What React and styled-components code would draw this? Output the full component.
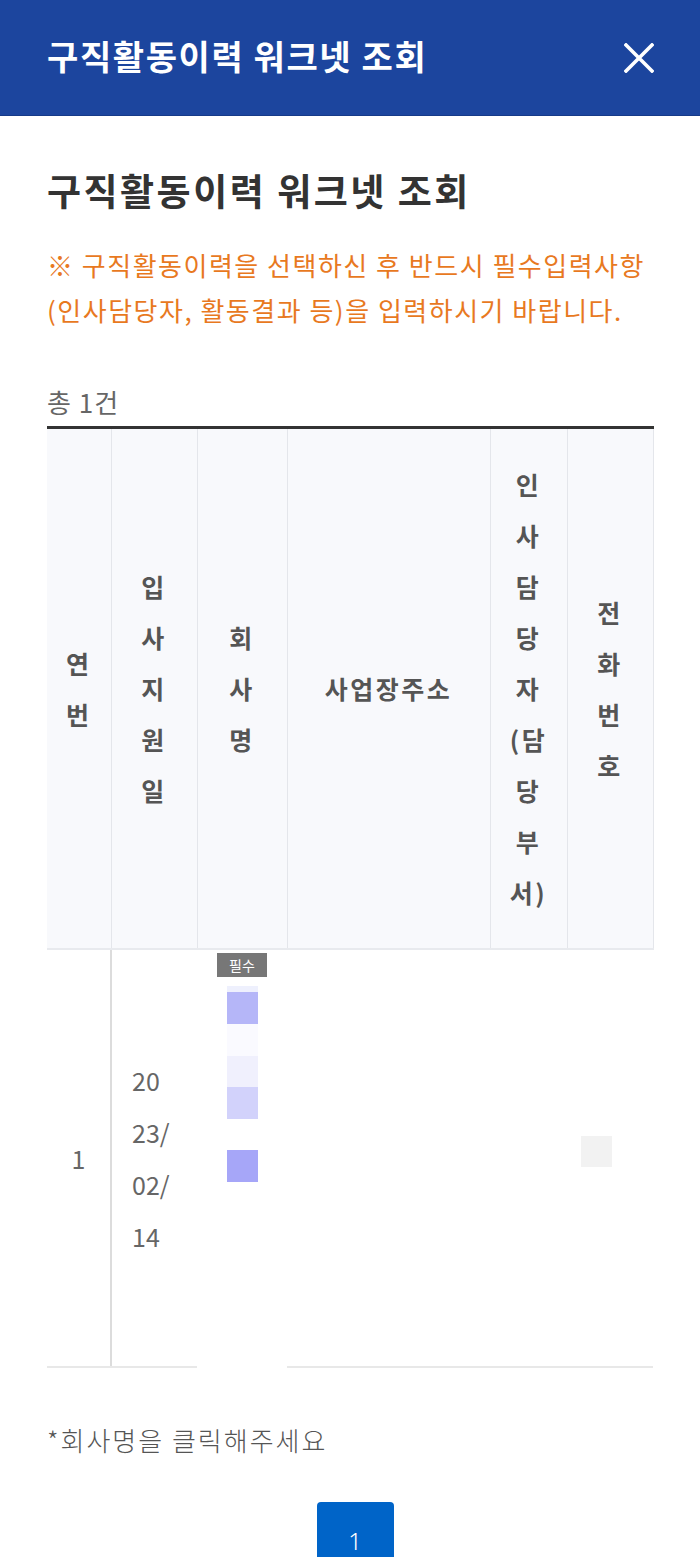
import React from 'react';
import styled, { createGlobalStyle } from 'styled-components';

const GlobalStyle = createGlobalStyle`
  * { box-sizing: border-box; }
  body {
    margin: 0;
    background: #fff;
    font-family: "Noto Sans CJK KR", "Noto Sans", sans-serif;
  }
`;

const Header = styled.header`
  height: 116px;
  background: #1c459e;
  border-bottom: 1px solid #163a88;
  display: flex;
  align-items: center;
  justify-content: space-between;
  padding: 0 44px 0 47px;
`;

const HeaderTitle = styled.h1`
  margin: 0 0 4px;
  color: #fff;
  font-size: 34px;
  font-weight: 700;
  letter-spacing: 1.6px;
`;

const CloseButton = styled.button`
  width: 34px;
  height: 34px;
  padding: 0;
  border: 0;
  background: none;
  display: flex;
  align-items: center;
  justify-content: center;
`;

const Main = styled.main`
  padding: 0 47px;
`;

const Heading = styled.h2`
  margin: 50px 0 0;
  font-size: 37px;
  line-height: 48px;
  font-weight: 700;
  color: #333;
  letter-spacing: 2.5px;
`;

const Notice = styled.p`
  margin: 28px 0 0;
  font-size: 26px;
  line-height: 45px;
  color: #e8791f;
  letter-spacing: 1.5px;
`;

const Total = styled.div`
  margin-top: 52px;
  font-size: 26px;
  line-height: 36px;
  color: #666;
  letter-spacing: 1px;
`;

const Table = styled.table`
  margin-top: 6px;
  width: 100%;
  table-layout: fixed;
  border-collapse: collapse;
  border-top: 3px solid #333;
`;

const Th = styled.th`
  padding: 30px ${({ $pad }) => $pad}px;
  background: #f8f9fc;
  border-left: 1px solid #e4e6eb;
  border-right: 1px solid #e4e6eb;
  border-bottom: 2px solid #e8eaee;
  font-size: 25px;
  line-height: 51px;
  font-weight: 600;
  color: #555;
  text-align: center;
  letter-spacing: 2.5px;
  word-break: break-all;
  &:first-child { border-left: 0; }
`;

const Td = styled.td`
  height: 418px;
  padding: 0 ${({ $padR }) => $padR ?? 14}px 0 ${({ $padL }) => $padL ?? 14}px;
  vertical-align: ${({ $top }) => ($top ? 'top' : 'middle')};
  text-align: ${({ $center }) => ($center ? 'center' : 'left')};
  font-size: 25px;
  line-height: 52px;
  color: #666;
  word-break: break-all;
  border-bottom: 2px solid ${({ $noLine }) => ($noLine ? 'transparent' : '#e8e8e8')};
  border-left: ${({ $divider }) => ($divider ? '2px solid #dcdcdc' : '0')};
`;

const Badge = styled.span`
  display: block;
  margin: 3px auto 0;
  width: 50px;
  height: 24px;
  background: #777;
  color: #fff;
  font-size: 14px;
  line-height: 24px;
  text-align: center;
`;

const Mosaic = styled.div`
  margin: 9px auto 0;
  width: 31px;
  display: flex;
  flex-direction: column;
`;

const Tile = styled.div`
  height: ${({ $h }) => $h}px;
  background: ${({ $c }) => $c};
`;

const Placeholder = styled.div`
  width: 31px;
  height: 31px;
  background: #f2f2f2;
  margin-top: -14px;
`;

const Hint = styled.p`
  margin: 54px 0 0;
  font-size: 26px;
  line-height: 36px;
  color: #555;
  font-weight: 300;
  letter-spacing: 2px;
`;

const Pagination = styled.nav`
  margin-top: 44px;
  display: flex;
  justify-content: center;
  padding-bottom: 20px;
`;

const PageButton = styled.button`
  width: 77px;
  height: 76px;
  border: 0;
  border-radius: 4px;
  background: ${({ $active }) => ($active ? '#0064c8' : '#fff')};
  color: ${({ $active }) => ($active ? '#fff' : '#333')};
  font-family: "Noto Sans", sans-serif;
  font-size: 24px;
  font-weight: 300;
  margin-left: 10px;
`;

const columns = [
  { label: '연번', width: 64, pad: 10 },
  { label: '입사지원일', width: 86, pad: 20 },
  { label: '회사명', width: 90, pad: 22 },
  { label: '사업장주소', width: 203, pad: 20 },
  { label: '인사담당자(담당부서)', width: 77, pad: 16 },
  { label: '전화번호', width: 86, pad: 20 },
];

const tiles = [
  { h: 6, c: '#eef0fd' },
  { h: 32, c: '#b5b6f8' },
  { h: 32, c: '#fafaff' },
  { h: 31, c: '#f0f0fd' },
  { h: 32, c: '#d2d2fb' },
  { h: 31, c: '#ffffff' },
  { h: 32, c: '#a6a6f8' },
];

const App = () => {
  return (
    <>
      <GlobalStyle />
      <Header>
        <HeaderTitle>구직활동이력 워크넷 조회</HeaderTitle>
        <CloseButton aria-label="닫기">
          <svg width="30" height="30" viewBox="0 0 30 30">
            <path d="M2 2 L28 28 M28 2 L2 28" stroke="#fff" strokeWidth="3.6" strokeLinecap="square" />
          </svg>
        </CloseButton>
      </Header>
      <Main>
        <Heading>구직활동이력 워크넷 조회</Heading>
        <Notice>
          ※ 구직활동이력을 선택하신 후 반드시 필수입력사항
          <br />
          (인사담당자, 활동결과 등)을 입력하시기 바랍니다.
        </Notice>
        <Total>총 1건</Total>
        <Table>
          <colgroup>
            {columns.map((c) => (
              <col key={c.label} style={{ width: c.width }} />
            ))}
          </colgroup>
          <thead>
            <tr>
              {columns.map((c) => (
                <Th key={c.label} $pad={c.pad}>{c.label}</Th>
              ))}
            </tr>
          </thead>
          <tbody>
            <tr>
              <Td $center>1</Td>
              <Td $divider $padL={20} $padR={24}>2023/02/14</Td>
              <Td $top $center $noLine $padL={0} $padR={0}>
                <Badge>필수</Badge>
                <Mosaic>
                  {tiles.map((t, i) => (
                    <Tile key={i} $h={t.h} $c={t.c} />
                  ))}
                </Mosaic>
              </Td>
              <Td></Td>
              <Td></Td>
              <Td>
                <Placeholder />
              </Td>
            </tr>
          </tbody>
        </Table>
        <Hint>*회사명을 클릭해주세요</Hint>
        <Pagination>
          <PageButton $active>1</PageButton>
        </Pagination>
      </Main>
    </>
  );
};

export default App;
